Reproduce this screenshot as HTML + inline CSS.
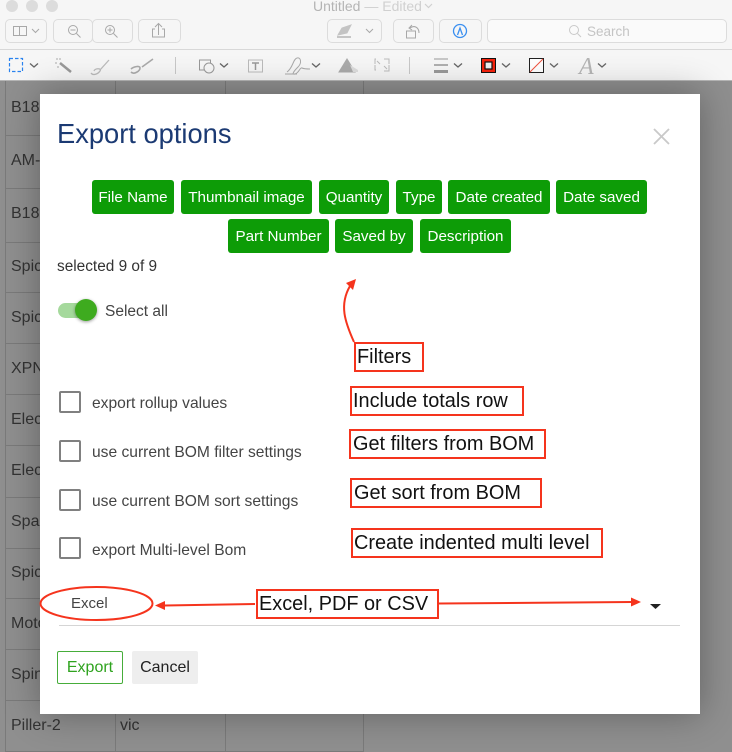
<!DOCTYPE html>
<html><head><meta charset="utf-8">
<style>
html,body{margin:0;padding:0;width:732px;height:752px;overflow:hidden;background:#909090;font-family:"Liberation Sans",sans-serif}
.a{position:absolute;white-space:nowrap}
#bg{position:absolute;left:0;top:81px;width:732px;height:671px;background:#8f8f8f}
.vl{position:absolute;top:81px;width:1px;height:671px;background:#7a7a7a}
.hl{position:absolute;left:5px;width:358px;height:1px;background:#7a7a7a}
.c{position:absolute;left:11px;font-size:16px;line-height:20px;color:#333;white-space:nowrap}
#dlg{position:absolute;left:40px;top:94px;width:660px;height:620px;background:#fff;box-shadow:0 0 34px rgba(0,0,0,.32)}
.chip{position:absolute;height:34px;line-height:35px;background:#0d9c07;color:#fff;border-radius:3px;font-size:15.2px;text-align:center;white-space:nowrap}
.cb{position:absolute;left:59px;width:18px;height:18px;border:2px solid #808080;border-radius:2px;background:#fff}
.lb{position:absolute;left:92px;font-size:15.6px;line-height:18px;color:#444;white-space:nowrap}
.rb{position:absolute;border:2px solid #f5341d;box-sizing:border-box;font-size:19.9px;color:#111;line-height:26px;white-space:nowrap;background:#fff;padding-left:1px}
.tb{position:absolute;top:19px;height:22px;border:1px solid #dcdcdc;border-radius:5px;background:#f6f6f6}
</style></head><body>
<div id="bg"></div>
<div class="vl" style="left:5px"></div><div class="vl" style="left:115px"></div><div class="vl" style="left:225px"></div><div class="vl" style="left:363px"></div>
<div class="hl" style="top:135px"></div><div class="hl" style="top:188px"></div><div class="hl" style="top:242px"></div><div class="hl" style="top:292px"></div><div class="hl" style="top:343px"></div><div class="hl" style="top:394px"></div><div class="hl" style="top:445px"></div><div class="hl" style="top:497px"></div><div class="hl" style="top:548px"></div><div class="hl" style="top:598px"></div><div class="hl" style="top:649px"></div><div class="hl" style="top:700px"></div><div class="hl" style="top:751px"></div>
<div class="c" style="top:98px">B18.</div><div class="c" style="top:151px">AM-</div><div class="c" style="top:204px">B18.</div><div class="c" style="top:257px">Spic</div><div class="c" style="top:308px">Spic</div><div class="c" style="top:359px">XPN</div><div class="c" style="top:410px">Elec</div><div class="c" style="top:461px">Elec</div><div class="c" style="top:512px">Spac</div><div class="c" style="top:563px">Spic</div><div class="c" style="top:614px">Moto</div><div class="c" style="top:665px">Spin</div><div class="c" style="top:716px">Piller-2</div><div class="c" style="top:716px;left:120px">vic</div>

<!-- mac chrome -->
<div class="a" style="left:0;top:0;width:732px;height:81px;background:#f6f6f6;border-bottom:1px solid #b5b5b5;box-sizing:border-box"></div>
<div class="a" style="left:0;top:49px;width:732px;height:1px;background:#d8d8d8"></div>
<div class="a" style="left:6px;top:0;width:12px;height:12px;border-radius:50%;background:#dcdcdc"></div>
<div class="a" style="left:26px;top:0;width:12px;height:12px;border-radius:50%;background:#dcdcdc"></div>
<div class="a" style="left:46px;top:0;width:12px;height:12px;border-radius:50%;background:#dcdcdc"></div>
<div class="a" style="left:313px;top:-2px;font-size:14px;line-height:16px;color:#b4b4b4">Untitled <span style="color:#d0d0d0">— Edited</span></div>
<div class="tb" style="left:5px;width:40px"></div>
<div class="tb" style="left:53px;width:38px"></div>
<div class="tb" style="left:92px;width:39px"></div>
<div class="tb" style="left:138px;width:41px"></div>
<div class="tb" style="left:327px;width:53px"></div>
<div class="tb" style="left:393px;width:39px"></div>
<div class="tb" style="left:439px;width:41px"></div>
<div class="tb" style="left:487px;width:238px;background:#fafafa"></div>
<div class="a" style="left:587px;top:24px;font-size:13.500px;line-height:15px;color:#c4c4c4">Search</div>
<svg class="a" style="left:0;top:0" width="732" height="81" fill="none" stroke="#a8a8a8" stroke-width="1">
<path d="M425 4l3.500 3.500L432 4" stroke="#d0d0d0" stroke-width="1.200"/>
<rect x="13.500" y="26.500" width="13" height="9"/><path d="M19.500 26.500v9M32 29l3.500 3.500 3.500-3.500"/>
<circle cx="73" cy="30" r="4.500"/><path d="M70.500 30h5M76.500 33.500l4 4"/>
<circle cx="110" cy="30" r="4.500"/><path d="M107.500 30h5M110 27.500v5M113.500 33.500l4 4"/>
<path d="M158.500 24v11M155 27l3.500-3.500 3.500 3.500M155 29h-2.500v8h12v-8h-2.500"/>
<path d="M338 35l4-7 9-3-4 8z" fill="#c4c4c4" stroke="#c4c4c4"/><path d="M337 37h14" stroke-width="1.500" stroke="#b5b5b5"/>
<path d="M366 29l3.500 3.500 3.500-3.500"/>
<rect x="406.500" y="31" width="9" height="7"/><path d="M410 28c4-3 9-1 9 5M412 25l-3 3 3 2"/>
<circle cx="460" cy="31" r="6.500" stroke="#3a8ff0" stroke-width="1.300"/><path d="M457.500 35l2.500-7 2.500 7" stroke="#3a8ff0" stroke-width="1.300"/>
<circle cx="574" cy="30" r="4.500" stroke="#c9c9c9"/><path d="M577.500 33.500l3.500 3.500" stroke="#c9c9c9"/>
<rect x="9.500" y="58.500" width="13" height="13" stroke="#2a83ef" stroke-width="1.200" stroke-dasharray="3.500 2"/>
<path d="M30 63.500l4 3.500 4-3.500M220 63.500l4 3.500 4-3.500M312 63.500l4 3.500 4-3.500M454 63.500l4 3.500 4-3.500M502 63.500l4 3.500 4-3.500M550 63.500l4 3.500 4-3.500M598 63.500l4 3.500 4-3.500" stroke="#666" stroke-width="1.300"/>
<path d="M60 63l11 9" stroke="#999" stroke-width="2.500"/><path d="M56 59h2M60 58v2M55 63h2M58 66v2" stroke="#aaa" stroke-width="1"/>
<path d="M91 73c2 3 7 1 9-2s-5-3-6 0M100 70l9-10" stroke="#bbb" stroke-width="1.300"/>
<path d="M131 72c3 3 9-1 9-4s-7-1-9 1M142 67l11-8" stroke="#aaa" stroke-width="1.600"/>
<path d="M175.500 57v17" stroke="#c8c8c8"/>
<rect x="199.500" y="60" width="11" height="10" stroke="#999"/><circle cx="209" cy="68" r="5" fill="#f6f6f6" stroke="#999"/>
<rect x="248.500" y="60" width="14" height="12" stroke="#bbb"/><path d="M252 63h7M255.500 63v7" stroke="#999" stroke-width="1.500"/>
<path d="M287 72c6-4 6-13 10-14s5 5 1 9-7 8-3 7 5-7 7-6 5 1 8 1M285 74h12" stroke="#aaa"/>
<path d="M339 72l8-13 8 13z" fill="#aaa" stroke="#aaa"/><path d="M350 65l8 5v2h-5z" fill="#ddd" stroke="none"/>
<path d="M376 59h-1v5M384 59h5v5M376 70h-1v-5M389 65v6h-5M377 61l3 3M387 69l-3-3" stroke="#bbb"/>
<path d="M409.500 57v17" stroke="#c8c8c8"/>
<path d="M434 59h14" stroke="#999"/><path d="M434 65h14" stroke="#999" stroke-width="1.500"/><path d="M434 71.500h14" stroke="#999" stroke-width="3"/>
<rect x="481.500" y="58.500" width="14" height="14" fill="#f5220c" stroke="#111" stroke-width="1"/><rect x="485" y="62" width="7" height="7" fill="#eee" stroke="#111" stroke-width="1.200"/>
<rect x="529.500" y="58.500" width="14" height="14" fill="#fff" stroke="#222" stroke-width="1"/><path d="M530 72l13-13" stroke="#f0503c"/>
</svg>
<div class="a" style="left:579px;top:54px;font:italic 24px/26px 'Liberation Serif',serif;color:#b5b5b5">A</div>

<div id="dlg"></div>
<div class="a" style="left:57px;top:118px;font-size:27.300px;line-height:32px;color:#1b3a73">Export options</div>
<svg class="a" style="left:650px;top:125px" width="24" height="24" fill="none" stroke="#c9c9c9" stroke-width="1.800"><path d="M4 4l15 15M19 4L4 19"/></svg>

<div class="chip" style="left:92px;top:180px;width:82px">File Name</div>
<div class="chip" style="left:181px;top:180px;width:131px">Thumbnail image</div>
<div class="chip" style="left:319px;top:180px;width:70px">Quantity</div>
<div class="chip" style="left:396px;top:180px;width:46px">Type</div>
<div class="chip" style="left:448px;top:180px;width:102px">Date created</div>
<div class="chip" style="left:556px;top:180px;width:91px">Date saved</div>
<div class="chip" style="left:228px;top:219px;width:101px">Part Number</div>
<div class="chip" style="left:335px;top:219px;width:78px">Saved by</div>
<div class="chip" style="left:420px;top:219px;width:91px">Description</div>

<div class="a" style="left:57px;top:258px;font-size:15.400px;line-height:18px;color:#333">selected 9 of 9</div>
<div class="a" style="left:58px;top:303px;width:35px;height:15px;border-radius:8px;background:#a5d99c"></div>
<div class="a" style="left:75px;top:299px;width:22px;height:22px;border-radius:50%;background:#3eab1f;box-shadow:0 1px 3px rgba(0,0,0,.4)"></div>
<div class="a" style="left:105px;top:303px;font-size:15.500px;line-height:18px;color:#444">Select all</div>

<div class="cb" style="top:391px"></div><div class="lb" style="top:395px">export rollup values</div>
<div class="cb" style="top:440px"></div><div class="lb" style="top:444px">use current BOM filter settings</div>
<div class="cb" style="top:489px"></div><div class="lb" style="top:493px">use current BOM sort settings</div>
<div class="cb" style="top:537px"></div><div class="lb" style="top:542px">export Multi-level Bom</div>

<div class="rb" style="left:354px;top:342px;width:70px;height:30px">Filters</div>
<div class="rb" style="left:350px;top:386px;width:174px;height:30px;line-height:27px">Include totals row</div>
<div class="rb" style="left:349px;top:429px;width:197px;height:30px;padding-left:2px">Get filters from BOM</div>
<div class="rb" style="left:350px;top:478px;width:192px;height:30px;padding-left:2px">Get sort from BOM</div>
<div class="rb" style="left:351px;top:528px;width:252px;height:30px">Create indented multi level</div>
<div class="rb" style="left:256px;top:589px;width:183px;height:30px">Excel, PDF or CSV</div>

<div class="a" style="left:71px;top:595px;font-size:15px;line-height:18px;color:#444">Excel</div>
<div class="a" style="left:59px;top:625px;width:621px;height:1px;background:#d5d5d5"></div>
<svg class="a" style="left:0;top:0;pointer-events:none" width="732" height="752" fill="none" stroke="#f5341d" stroke-width="2">
<ellipse cx="96.500" cy="603.500" rx="56" ry="16.500"/>
<path d="M255 604L165 605.500"/><path d="M155 605.500l10-4.500v9z" fill="#f5341d" stroke="none"/>
<path d="M439 603.500L632 602"/><path d="M641 602l-10-4.500v9z" fill="#f5341d" stroke="none"/>
<path d="M354 342C345 322 339 305 350 286"/><path d="M356 279l-10 4 7 7z" fill="#f5341d" stroke="none"/>
<path d="M650 604h11l-5.500 5z" fill="#222" stroke="none"/>
</svg>

<div class="a" style="left:57px;top:651px;width:64px;height:31px;border:1px solid #46ad3a;border-radius:2px;text-align:center;font-size:16px;line-height:32px;color:#2fa31f">Export</div>
<div class="a" style="left:132px;top:651px;width:66px;height:33px;background:#eeeeee;border-radius:2px;text-align:center;font-size:16px;line-height:33px;color:#222">Cancel</div>
</body></html>
